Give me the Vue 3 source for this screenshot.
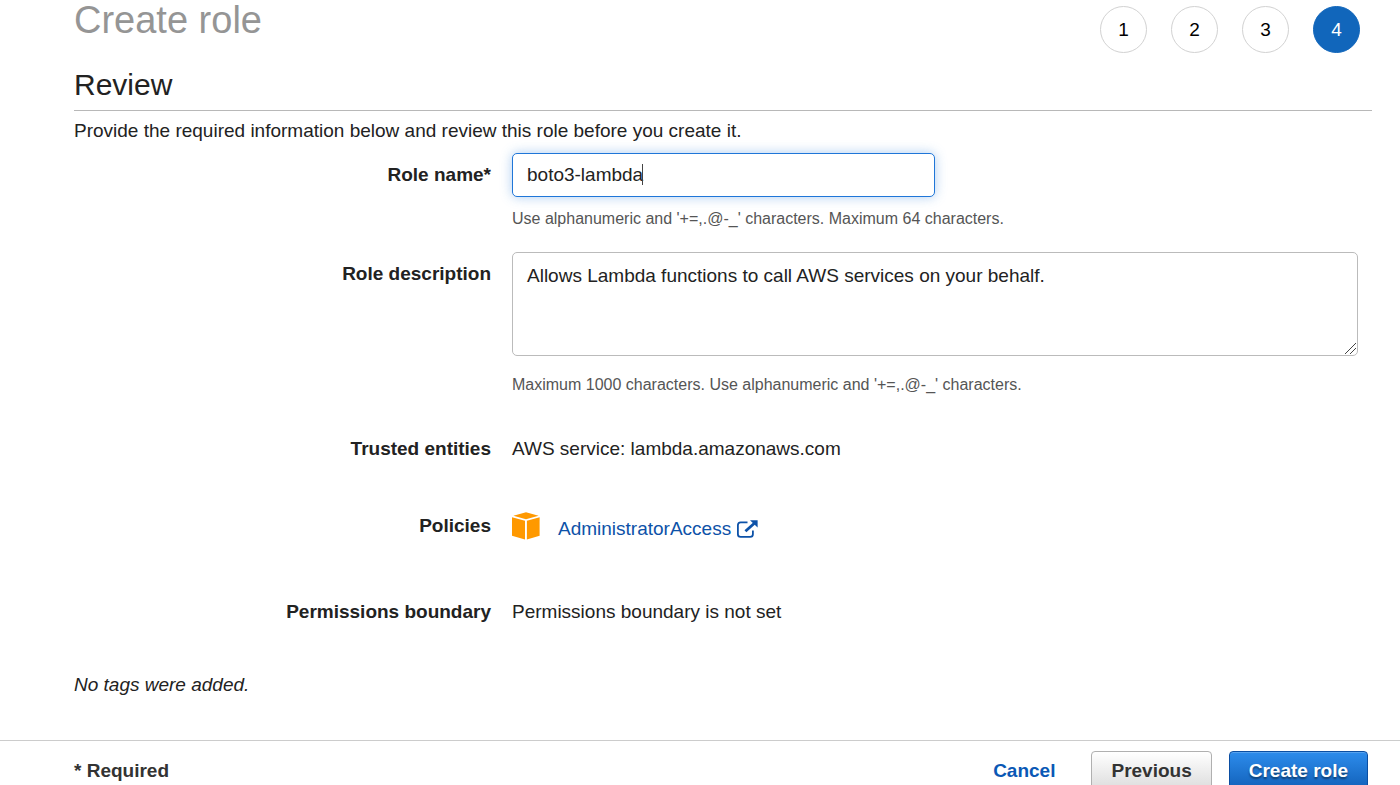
<script setup>
import { nextTick, onMounted, ref } from 'vue'

const steps = [1, 2, 3, 4]
const currentStep = 4
const roleName = ref('boto3-lambda')
const description = ref('Allows Lambda functions to call AWS services on your behalf.')
const nameField = ref(null)

onMounted(async () => {
  await nextTick()
  nameField.value.focus({ preventScroll: true })
  nameField.value.setSelectionRange(roleName.value.length, roleName.value.length)
})
</script>

<template>
  <form class="wizard" @submit.prevent>
    <main class="content">
      <header class="top">
        <h1>Create role</h1>
        <ol class="steps">
          <li v-for="s in steps" :key="s" class="step" :class="{ active: s === currentStep }">{{ s }}</li>
        </ol>
      </header>

      <h2>Review</h2>
      <p class="intro">Provide the required information below and review this role before you create it.</p>

      <div class="row name-row">
        <label class="label" for="role-name">Role name*</label>
        <div class="field">
          <input id="role-name" ref="nameField" v-model="roleName" class="text-input" type="text" autocomplete="off" spellcheck="false">
          <span class="caret" aria-hidden="true"></span>
          <p class="hint">Use alphanumeric and '+=,.@-_' characters. Maximum 64 characters.</p>
        </div>
      </div>

      <div class="row description-row">
        <label class="label" for="role-description">Role description</label>
        <div class="field">
          <textarea id="role-description" v-model="description" class="text-area" spellcheck="false"></textarea>
          <p class="hint area-hint">Maximum 1000 characters. Use alphanumeric and '+=,.@-_' characters.</p>
        </div>
      </div>

      <div class="row entities-row">
        <span class="label">Trusted entities</span>
        <span class="value">AWS service: lambda.amazonaws.com</span>
      </div>

      <div class="row policies-row">
        <span class="label">Policies</span>
        <div class="policy">
          <svg class="cube" viewBox="0 0 28 28" aria-hidden="true">
            <path d="M14 0.3 L26.6 3.7 L14 7.2 L1.4 3.7 Z" />
            <path d="M0 5.2 L13 8.8 V27.4 L0 23.8 Z" />
            <path d="M27.6 5.2 L14.9 8.8 V27.4 L27.6 23.8 Z" />
          </svg>
          <a class="policy-link" href="#">AdministratorAccess
            <svg class="external" viewBox="0 0 22 18" aria-hidden="true">
              <path class="frame" d="M10.5 2.4 H3.6 Q0.9 2.4 0.9 5.1 V14.2 Q0.9 16.9 3.6 16.9 H13.2 Q15.9 16.9 15.9 14.2 V10.6" />
              <path class="shaft" d="M8.4 11.2 L17.4 3.2" />
              <path class="head" d="M13 0.2 H20.6 V7.6 Z" />
            </svg>
          </a>
        </div>
      </div>

      <div class="row boundary-row">
        <span class="label">Permissions boundary</span>
        <span class="value">Permissions boundary is not set</span>
      </div>

      <p class="tags">No tags were added.</p>
    </main>

    <footer class="actions">
      <span class="required">* Required</span>
      <button class="cancel" type="button">Cancel</button>
      <button class="button previous" type="button">Previous</button>
      <button class="button primary" type="submit">Create role</button>
    </footer>
  </form>
</template>

<style>
body {
  margin: 0;
  background: #fff;
}
</style>

<style scoped>
.wizard {
  height: 100vh;
  overflow: hidden;
  font-family: "Liberation Sans", Arial, sans-serif;
  font-size: 19px;
  line-height: 24px;
  color: #222;
}

h1, h2, p, ol {
  margin: 0;
  padding: 0;
}

.content {
  padding: 0 28px 43px 74px;
}

.top {
  display: flex;
  justify-content: space-between;
  align-items: flex-start;
  height: 67px;
}

h1 {
  font-size: 38px;
  line-height: 40px;
  font-weight: 400;
  color: #959595;
}

.steps {
  display: flex;
  gap: 24px;
  list-style: none;
  padding: 6px 12px 0 0;
}

.step {
  box-sizing: border-box;
  width: 47px;
  height: 47px;
  border: 1px solid #d2d2d2;
  border-radius: 50%;
  line-height: 46px;
  text-align: center;
  color: #000;
}

.step.active {
  background: #1166bb;
  border-color: #1166bb;
  color: #fff;
}

h2 {
  padding-bottom: 7px;
  border-bottom: 1px solid #b8b8b8;
  font-size: 30px;
  line-height: 36px;
  font-weight: 400;
}

.intro {
  padding-top: 8px;
}

.row {
  display: grid;
  grid-template-columns: 417px 1fr;
  column-gap: 21px;
  padding-right: 14px;
}

.label {
  text-align: right;
  font-weight: 700;
}

.field {
  position: relative;
}

.name-row {
  margin-top: 10px;
}

.name-row .label {
  padding-top: 10px;
}

.text-input, .text-area {
  display: block;
  box-sizing: border-box;
  margin: 0;
  border-radius: 5px;
  background: #fff;
  font: inherit;
  color: #222;
  outline: none;
}

.text-input {
  width: 50%;
  height: 44px;
  padding: 0 14px;
  border: 1px solid #1f76d8;
  box-shadow: 0 0 12px rgba(50, 130, 220, 0.4);
  caret-color: transparent;
}

.caret {
  position: absolute;
  top: 11px;
  left: 130px;
  width: 1px;
  height: 21px;
  background: #444;
}

.text-area {
  width: 100%;
  height: 104px;
  padding: 11px 14px;
  border: 1px solid #bbb;
  resize: both;
}

.text-area::-webkit-resizer {
  background: linear-gradient(135deg, transparent 47%, #444 47%, #444 53%, transparent 53%, transparent 70%, #444 70%, #444 76%, transparent 76%) 3px 3px / 11px 11px no-repeat;
}

.hint {
  padding-top: 12px;
  font-size: 16px;
  line-height: 20px;
  color: #555;
}

.area-hint {
  padding-top: 19px;
}

.description-row {
  margin-top: 23px;
}

.description-row .label {
  padding-top: 10px;
}

.entities-row {
  margin-top: 42px;
}

.policies-row {
  margin-top: 51px;
}

.policies-row .label {
  padding-top: 2px;
}

.policy {
  display: flex;
  gap: 18px;
}

.cube {
  width: 28px;
  height: 28px;
  fill: #ff9900;
}

.policy-link {
  display: flex;
  align-items: center;
  gap: 6px;
  padding-top: 5px;
  color: #0d52a8;
  text-decoration: none;
}

.external {
  width: 22px;
  height: 18px;
  fill: none;
  stroke: #0d52a8;
}

.external .frame {
  stroke-width: 1.8;
}

.external .shaft {
  stroke-width: 2.8;
}

.external .head {
  fill: #0d52a8;
  stroke: none;
}

.boundary-row {
  margin-top: 59px;
}

.tags {
  margin-top: 49px;
  font-style: italic;
}

.actions {
  display: flex;
  align-items: flex-start;
  padding: 10px 32px 10px 74px;
  border-top: 1px solid #ccc;
  font-weight: 700;
}

.required {
  margin-right: auto;
  padding-top: 8px;
  color: #333;
}

.actions button {
  font: inherit;
  cursor: pointer;
}

.cancel {
  margin-right: 36px;
  padding: 8px 0;
  border: 0;
  background: none;
  color: #0a58b5;
}

.button {
  padding: 7px 19px;
  border: 1px solid #b0b0b0;
  border-radius: 4px;
}

.previous {
  margin-right: 17px;
  background: linear-gradient(#fff, #dcdcdc);
  color: #333;
}

.primary {
  border-color: #0b4ea2;
  background: linear-gradient(#2d8cec, #1160b8);
  box-shadow: inset 0 1px 0 rgba(255, 255, 255, 0.2);
  color: #fff;
  text-shadow: 0 2px 2px rgba(0, 0, 0, 0.45);
}
</style>
